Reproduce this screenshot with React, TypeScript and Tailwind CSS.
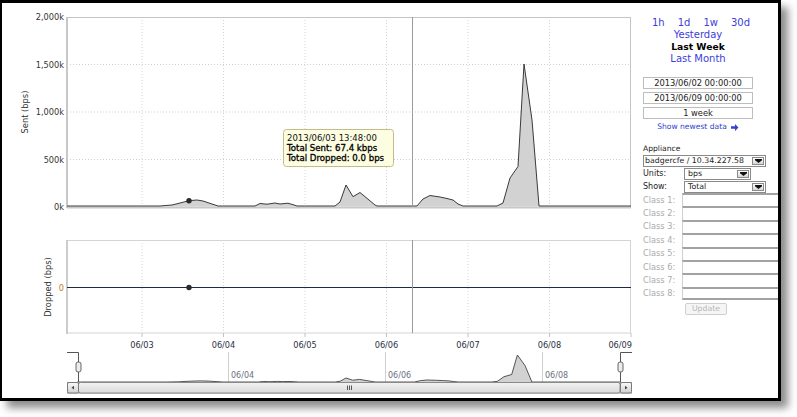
import React from "react";

const topPts: [number, number][] = [
  [67, 206], [160, 206], [172, 205], [180, 203], [189, 200.7], [197, 200], [203, 201], [212, 204], [218, 206],
  [255, 206], [260, 203.5], [267, 204.2], [275, 203], [280, 204], [288, 203.2], [294, 205], [297, 206],
  [335, 206], [340, 202], [346, 185], [353, 196.7], [360, 192.5], [375, 205], [377, 206],
  [417, 206], [423, 199], [430, 195.5], [440, 197], [447, 198.5], [453, 200], [458, 204], [463, 206],
  [497, 206], [503, 203], [510, 178], [518, 166.5], [524, 64], [532, 120], [539, 206], [631, 206],
];

const navPts: [number, number][] = topPts.map(([x, y]) => [
  228 + (x - 223.5) * (78.5 / 81.5),
  382 - (206 - y) * 0.19,
]);

function linePath(pts: [number, number][]) {
  return pts.map(([x, y], i) => `${i === 0 ? "M" : "L"}${x.toFixed(1)},${y.toFixed(1)}`).join(" ");
}
function areaPath(pts: [number, number][], base: number) {
  const first = pts[0];
  const last = pts[pts.length - 1];
  return `M${first[0]},${base} ` + pts.map(([x, y]) => `L${x.toFixed(1)},${y.toFixed(1)}`).join(" ") + ` L${last[0]},${base} Z`;
}

const ticks = [142, 223.5, 305, 386.5, 468, 549.5];
const tickLabels = ["06/03", "06/04", "06/05", "06/06", "06/07", "06/08"];

function Chart() {
  return (
    <svg width={638} height={395} className="shrink-0 block">
      <defs>
        <linearGradient id="sb" x1="0" y1="0" x2="0" y2="1">
          <stop offset="0" stopColor="#fbfbfb" />
          <stop offset="1" stopColor="#cfcfcf" />
        </linearGradient>
        <linearGradient id="sbt" x1="0" y1="0" x2="0" y2="1">
          <stop offset="0" stopColor="#f2f2f2" />
          <stop offset="1" stopColor="#dadada" />
        </linearGradient>
      </defs>
      <g transform="translate(-2,-3)">
        {/* ===== Top chart ===== */}
        {[64.5, 112, 159.5].map((y) => (
          <line key={y} x1={67} x2={631} y1={y} y2={y} stroke="#cfcfcf" strokeDasharray="1,2" />
        ))}
        {ticks.map((x) => (
          <line key={"v" + x} x1={x} x2={x} y1={17} y2={206} stroke="#d6d6d6" strokeDasharray="1,2" />
        ))}
        <line x1={67} x2={631} y1={17.5} y2={17.5} stroke="#c4c4c4" />
        <line x1={630.5} x2={630.5} y1={17} y2={207} stroke="#c4c4c4" />
        <line x1={67} x2={67} y1={17} y2={208} stroke="#c8c8c8" strokeWidth={2} />
        <line x1={67} x2={631} y1={207.5} y2={207.5} stroke="#c8c8c8" strokeWidth={2} />
        <path d={areaPath(topPts, 206.5)} fill="#d2d2d2" />
        <path d={linePath(topPts)} fill="none" stroke="#3a3a3a" strokeWidth={1} />
        <line x1={412.5} x2={412.5} y1={17} y2={207} stroke="#9a9a9a" />
        <circle cx={189} cy={200.7} r={2.7} fill="#2a2a2a" />

        {[
          ["2,000k", 17],
          ["1,500k", 64.5],
          ["1,000k", 112],
          ["500k", 159.5],
          ["0k", 207],
        ].map(([t, y]) => (
          <text key={t as string} x={64} y={y as number} textAnchor="end" dominantBaseline="central" fontSize={8.2} fill="#333">
            {t}
          </text>
        ))}
        <text x={25} y={112} transform="rotate(-90 25 112)" textAnchor="middle" dominantBaseline="central" fontSize={8.3} fill="#333">
          Sent (bps)
        </text>

        {/* tooltip */}
        <rect x={283.5} y={129.5} width={110} height={37} rx={3} fill="#fdfde2" stroke="#c2bb8a" />
        <text x={287} y={137.5} dominantBaseline="central" fontSize={8.5} fill="#111">2013/06/03 13:48:00</text>
        <text x={287} y={147.5} dominantBaseline="central" fontSize={8.6} fill="#000" stroke="#000" strokeWidth={0.3}>Total Sent: 67.4 kbps</text>
        <text x={287} y={157.5} dominantBaseline="central" fontSize={8.6} fill="#000" stroke="#000" strokeWidth={0.3}>Total Dropped: 0.0 bps</text>

        {/* ===== Lower chart ===== */}
        {ticks.map((x) => (
          <line key={"lv" + x} x1={x} x2={x} y1={240} y2={333} stroke="#d6d6d6" strokeDasharray="1,2" />
        ))}
        <rect x={67.5} y={240.5} width={563} height={92.5} fill="none" stroke="#d4d4d4" />
        <line x1={67} x2={67} y1={240} y2={334} stroke="#cccccc" strokeWidth={2} />
        <line x1={67} x2={631} y1={287.5} y2={287.5} stroke="#1e2a44" />
        <line x1={412.5} x2={412.5} y1={240} y2={333} stroke="#9a9a9a" />
        <circle cx={189} cy={287.5} r={2.7} fill="#2a2a2a" />
        <text x={64} y={287.5} textAnchor="end" dominantBaseline="central" fontSize={8.2} fill="#c27a1c">0</text>
        <text x={48} y={287} transform="rotate(-90 48 287)" textAnchor="middle" dominantBaseline="central" fontSize={8.3} fill="#333">
          Dropped (bps)
        </text>
        {[...ticks, 631].map((x) => (
          <line key={"t" + x} x1={x} x2={x} y1={333} y2={337} stroke="#b8c4d8" />
        ))}
        {tickLabels.map((t, i) => (
          <text key={t} x={ticks[i]} y={345} textAnchor="middle" dominantBaseline="central" fontSize={8.2} fill="#2a2f44">
            {t}
          </text>
        ))}
        <text x={632} y={345} textAnchor="end" dominantBaseline="central" fontSize={8.2} fill="#2a2f44">06/09</text>

        {/* ===== Navigator ===== */}
        {[228, 385, 542].map((x) => (
          <line key={"n" + x} x1={x + 0.5} x2={x + 0.5} y1={352} y2={382} stroke="#cfcfcf" />
        ))}
        {[["06/04", 231], ["06/06", 388], ["06/08", 545]].map(([t, x]) => (
          <text key={t as string} x={x as number} y={375} dominantBaseline="central" fontSize={8} fill="#6a7080">
            {t}
          </text>
        ))}
        <path d={areaPath(navPts, 382)} fill="#d2d2d2" />
        <path d={linePath(navPts)} fill="none" stroke="#444" strokeWidth={0.9} />
        <path d="M67,352.5 H78.5 V382" fill="none" stroke="#555" />
        <path d="M632,352.5 H620.5 V382" fill="none" stroke="#555" />
        <rect x={76} y={362} width={5} height={10} rx={2} fill="#ececec" stroke="#666" />
        <rect x={618} y={362} width={5} height={10} rx={2} fill="#ececec" stroke="#666" />

        {/* scrollbar */}
        <rect x={67.5} y={382.5} width={564} height={10.5} fill="#e8e8e8" stroke="#9a9a9a" />
        <rect x={78.5} y={382.5} width={541.5} height={10.5} rx={2} fill="url(#sbt)" stroke="#8a8a8a" />
        {[347.5, 349.5, 351.5].map((x) => (
          <line key={"g" + x} x1={x} x2={x} y1={385.5} y2={390} stroke="#555" />
        ))}
        <rect x={67.5} y={382.5} width={11} height={10.5} rx={1.5} fill="url(#sb)" stroke="#7a7a7a" />
        <path d="M71.5,387.7 L74,385.8 L74,389.6 Z" fill="#444" />
        <rect x={620.5} y={382.5} width={11} height={10.5} rx={1.5} fill="url(#sb)" stroke="#7a7a7a" />
        <path d="M627.5,387.7 L625,385.8 L625,389.6 Z" fill="#444" />
      </g>
    </svg>
  );
}

function DropBtn() {
  return (
    <span className="w-[12px] shrink-0 m-[1px] border border-[#8a8a8a] bg-[linear-gradient(#fdfdfd,#d6d6d6)] flex items-end justify-center pb-[1px]">
      <svg width="7" height="4" className="block">
        <path d="M0 0 H7 V1.3 L3.5 4 L0 1.3 Z" fill="#111" />
      </svg>
    </span>
  );
}

export default function App() {
  return (
    <div className="w-[797px] h-[417px] bg-white overflow-hidden">
      <div className="w-[781px] h-[401px] border-t-[3px] border-l-2 border-r-[3px] border-b-[3px] border-black bg-white shadow-[7px_7px_8px_rgba(0,0,0,0.45)] flex overflow-hidden font-['DejaVu_Sans',Verdana,sans-serif] text-[#222]">
        <Chart />
        <div className="flex flex-col w-[138px] shrink-0 pl-[3px] pt-[14px] leading-none">
          <div className="w-[110px] flex flex-col items-center">
            <div className="flex gap-[13px] self-start ml-[9px] text-[10px] leading-[12px] text-[#3d3dd8]">
              <span>1h</span>
              <span>1d</span>
              <span>1w</span>
              <span>30d</span>
            </div>
            <div className="text-[10px] leading-[12px] text-[#3d3dd8]">Yesterday</div>
            <div className="text-[9.2px] leading-[12px] font-bold text-black">Last Week</div>
            <div className="text-[10px] leading-[12px] text-[#3d3dd8]">Last Month</div>
            <div className="mt-[12px] w-[110px] h-[12px] border border-[#bdbdbd] bg-white text-[8.3px] leading-[10px] text-center">2013/06/02 00:00:00</div>
            <div className="mt-[3px] w-[110px] h-[12px] border border-[#bdbdbd] bg-white text-[8.3px] leading-[10px] text-center">2013/06/09 00:00:00</div>
            <div className="mt-[3px] w-[110px] h-[12px] border border-[#bdbdbd] bg-white text-[8.3px] leading-[10px] text-center">1 week</div>
            <div className="mt-[2px] h-[12px] flex items-center gap-[4px] text-[7.6px] text-[#3344cc]">
              <span>Show newest data</span>
              <svg width="8" height="7" className="block">
                <path d="M0 2.3 H4 V0 L7.5 3.5 L4 7 V4.7 H0 Z" fill="#3344cc" />
              </svg>
            </div>
          </div>
          <div className="mt-[11px] text-[7.6px] leading-[10px] text-[#222]">Appliance</div>
          <div className="mt-[1px] w-[123px] h-[12px] border border-[#8a8a8a] bg-white flex items-stretch">
            <span className="flex-1 pl-[1px] text-[7.8px] leading-[10px] whitespace-nowrap overflow-hidden">badgercfe / 10.34.227.58</span>
            <DropBtn />
          </div>
          <div className="flex items-center h-[13px]">
            <span className="w-[41px] text-[8px]">Units:</span>
            <div className="w-[67px] h-[12px] border border-[#8a8a8a] bg-white flex items-stretch">
              <span className="flex-1 pl-[3px] text-[7.8px] leading-[10px]">bps</span>
              <DropBtn />
            </div>
          </div>
          <div className="flex items-center h-[13px]">
            <span className="w-[41px] text-[8px]">Show:</span>
            <div className="w-[82px] h-[12px] border border-[#8a8a8a] bg-white flex items-stretch">
              <span className="flex-1 pl-[3px] text-[7.8px] leading-[10px]">Total</span>
              <DropBtn />
            </div>
          </div>
          <div className="flex flex-col">
            {[1, 2, 3, 4, 5, 6, 7, 8].map((n) => (
              <div key={n} className="flex items-stretch h-[13.4px]">
                <span className="w-[41px] flex items-center text-[8.2px] text-[#ababab]">Class {n}:</span>
                <div className={"w-[100px] bg-white border-t-2 border-t-[#a2a2a2] border-l border-l-[#cfcfcf]" + (n === 8 ? " border-b-2 border-b-[#a2a2a2]" : "")} />
              </div>
            ))}
          </div>
          <div className="mt-[3px] ml-[42px] w-[42px] h-[12px] border border-[#cfcfcf] rounded-[2px] bg-[#f5f5f5] flex items-center justify-center text-[7.8px] text-[#b8b8b8]">
            Update
          </div>
        </div>
      </div>
    </div>
  );
}
